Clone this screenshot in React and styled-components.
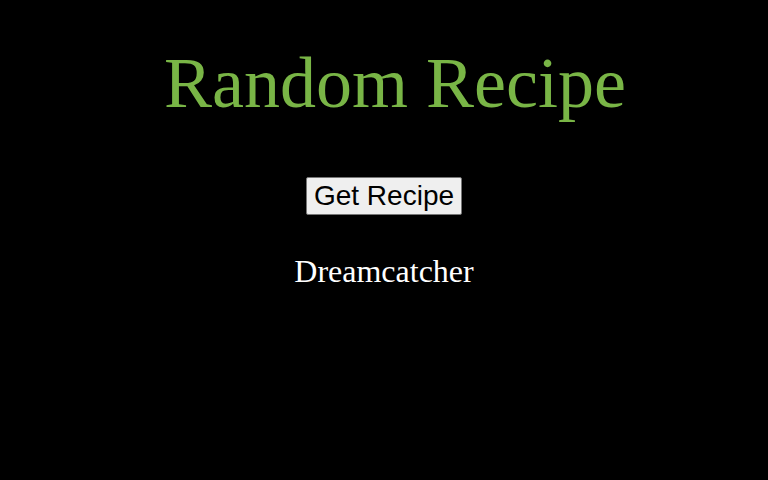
import { useState } from "react";
import styled, { createGlobalStyle } from "styled-components";

const GlobalStyle = createGlobalStyle`
  html, body {
    margin: 0;
    padding: 0;
    background: #000;
  }

  body {
    font-family: "Liberation Serif", "Times New Roman", serif;
  }
`;

const Page = styled.main`
  min-height: 100vh;
  display: flex;
  flex-direction: column;
  align-items: center;
  padding-top: 42px;
  box-sizing: border-box;
`;

const Title = styled.h1`
  margin: 0 0 52px;
  padding-left: 22px;
  font-family: "Liberation Serif", "Times New Roman", serif;
  font-size: 72px;
  font-weight: normal;
  line-height: normal;
  color: #79b546;
`;

const RecipeButton = styled.button`
  font-family: "Liberation Sans", Arial, sans-serif;
  font-size: 28px;
  line-height: normal;
  padding: 2px 7px;
  color: #000;
  background-color: #efefef;
  border: 1px solid #767676;
  border-radius: 2px;
  cursor: pointer;
`;

const RecipeName = styled.p`
  margin: 38px 0 0;
  font-size: 32px;
  line-height: normal;
  color: #fff;
`;

const recipes = ["Dreamcatcher", "Shakshuka", "Ratatouille", "Paella"];

const App = () => {
  const [recipe, setRecipe] = useState(recipes[0]);

  const handleClick = () => {
    setRecipe(recipes[Math.floor(Math.random() * recipes.length)]);
  };

  return (
    <>
      <GlobalStyle />
      <Page>
        <Title>Random Recipe</Title>
        <RecipeButton onClick={handleClick}>Get Recipe</RecipeButton>
        <RecipeName>{recipe}</RecipeName>
      </Page>
    </>
  );
};

export default App;
